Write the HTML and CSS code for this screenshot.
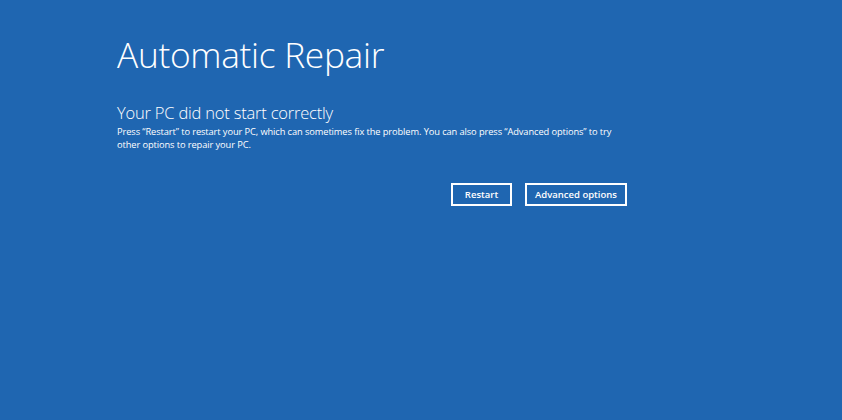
FILE: index.html
```html
<!DOCTYPE html>
<html>
<head>
<meta charset="utf-8">
<link rel="stylesheet" href="styles.css">
</head>
<body>
<main class="screen">
  <h1 class="title">Automatic Repair</h1>
  <h2 class="subtitle">Your PC did not start correctly</h2>
  <p class="message">Press “Restart” to restart your PC, which can sometimes fix the problem. You can also press “Advanced options” to try other options to repair your PC.</p>
  <div class="actions">
    <button class="btn btn-restart">Restart</button>
    <button class="btn btn-advanced">Advanced options</button>
  </div>
</main>
</body>
</html>
```
FILE: styles.css
```css
html, body {
  margin: 0;
  padding: 0;
  height: 100%;
}
body {
  background: #1f66b1;
  color: #ffffff;
  font-family: "Open Sans", "Noto Sans", sans-serif;
  overflow: hidden;
}
.screen {
  width: 510px;
  padding: 30px 0 0 117px;
  display: flex;
  flex-direction: column;
}
.title {
  margin: 0;
  font-size: 35.3px;
  font-weight: 300;
  line-height: 48px;
  letter-spacing: -0.3px;
}
.subtitle {
  margin: 24px 0 0 0;
  font-size: 16.5px;
  font-weight: 300;
  line-height: 22px;
  letter-spacing: -0.2px;
}
.message {
  margin: 1px 0 0 0;
  font-size: 9.3px;
  line-height: 13px;
  letter-spacing: -0.1px;
  width: 505px;
}
.actions {
  margin-top: 32px;
  display: flex;
  justify-content: flex-end;
  gap: 13px;
}
.btn {
  background: transparent;
  color: #ffffff;
  border: 2px solid #ffffff;
  font-family: "Open Sans", "Noto Sans", sans-serif;
  font-weight: 600;
  font-size: 9.5px;
  height: 23px;
  padding: 0;
  margin: 0;
}
.btn-restart {
  width: 61px;
}
.btn-advanced {
  width: 102px;
}
```
